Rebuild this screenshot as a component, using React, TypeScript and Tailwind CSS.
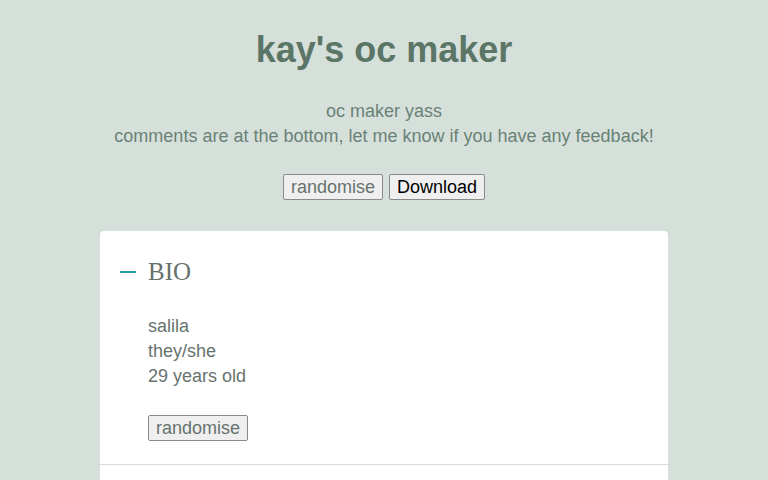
import React from "react";

export default function App() {
  return (
    <div
      className="min-h-[480px] bg-[#d6e0db] text-[#5b7566] overflow-hidden"
      style={{ fontFamily: '"Liberation Sans", Arial, sans-serif' }}
    >
      <h1 className="text-center text-[36px] font-bold leading-[41px] pt-[29px] mb-[29px]">
        kay's oc maker
      </h1>
      <div className="text-center text-[18px] leading-[25px] text-[#698276]">
        <p>oc maker yass</p>
        <p>comments are at the bottom, let me know if you have any feedback!</p>
      </div>
      <div className="flex justify-center gap-[6px] mt-[25px]">
        <button className="h-[26px] px-[7px] text-[18px] leading-[20px] bg-[#efefef] border border-[#8a8a8a] rounded-[2px] text-[#67736e]">
          randomise
        </button>
        <button className="h-[26px] px-[7px] text-[18px] leading-[20px] bg-[#efefef] border border-[#8a8a8a] rounded-[2px] text-black">
          Download
        </button>
      </div>
      <div className="mt-[31px] mx-auto w-[568px] bg-white rounded-t-[4px]">
        <div className="px-5 pt-[26px] pb-[23px] border-b border-[#d8dcda]">
          <div className="flex items-center h-[30px]">
            <span className="block w-[16px] h-[2px] bg-[#2a9fa8]" />
            <span
              className="ml-[12px] text-[25px] leading-[30px] text-[#64716c]"
              style={{ fontFamily: '"Liberation Serif", "Times New Roman", serif' }}
            >
              BIO
            </span>
          </div>
          <div className="ml-[28px] mt-[26.5px] text-[18px] leading-[25px] text-[#67736e]">
            <p>salila</p>
            <p>they/she</p>
            <p>29 years old</p>
            <div className="h-[26.5px]" />
            <button className="h-[26px] px-[7px] text-[18px] leading-[20px] bg-[#efefef] border border-[#8a8a8a] rounded-[2px] text-[#67736e]">
              randomise
            </button>
          </div>
        </div>
        <div className="h-[40px]" />
      </div>
    </div>
  );
}
